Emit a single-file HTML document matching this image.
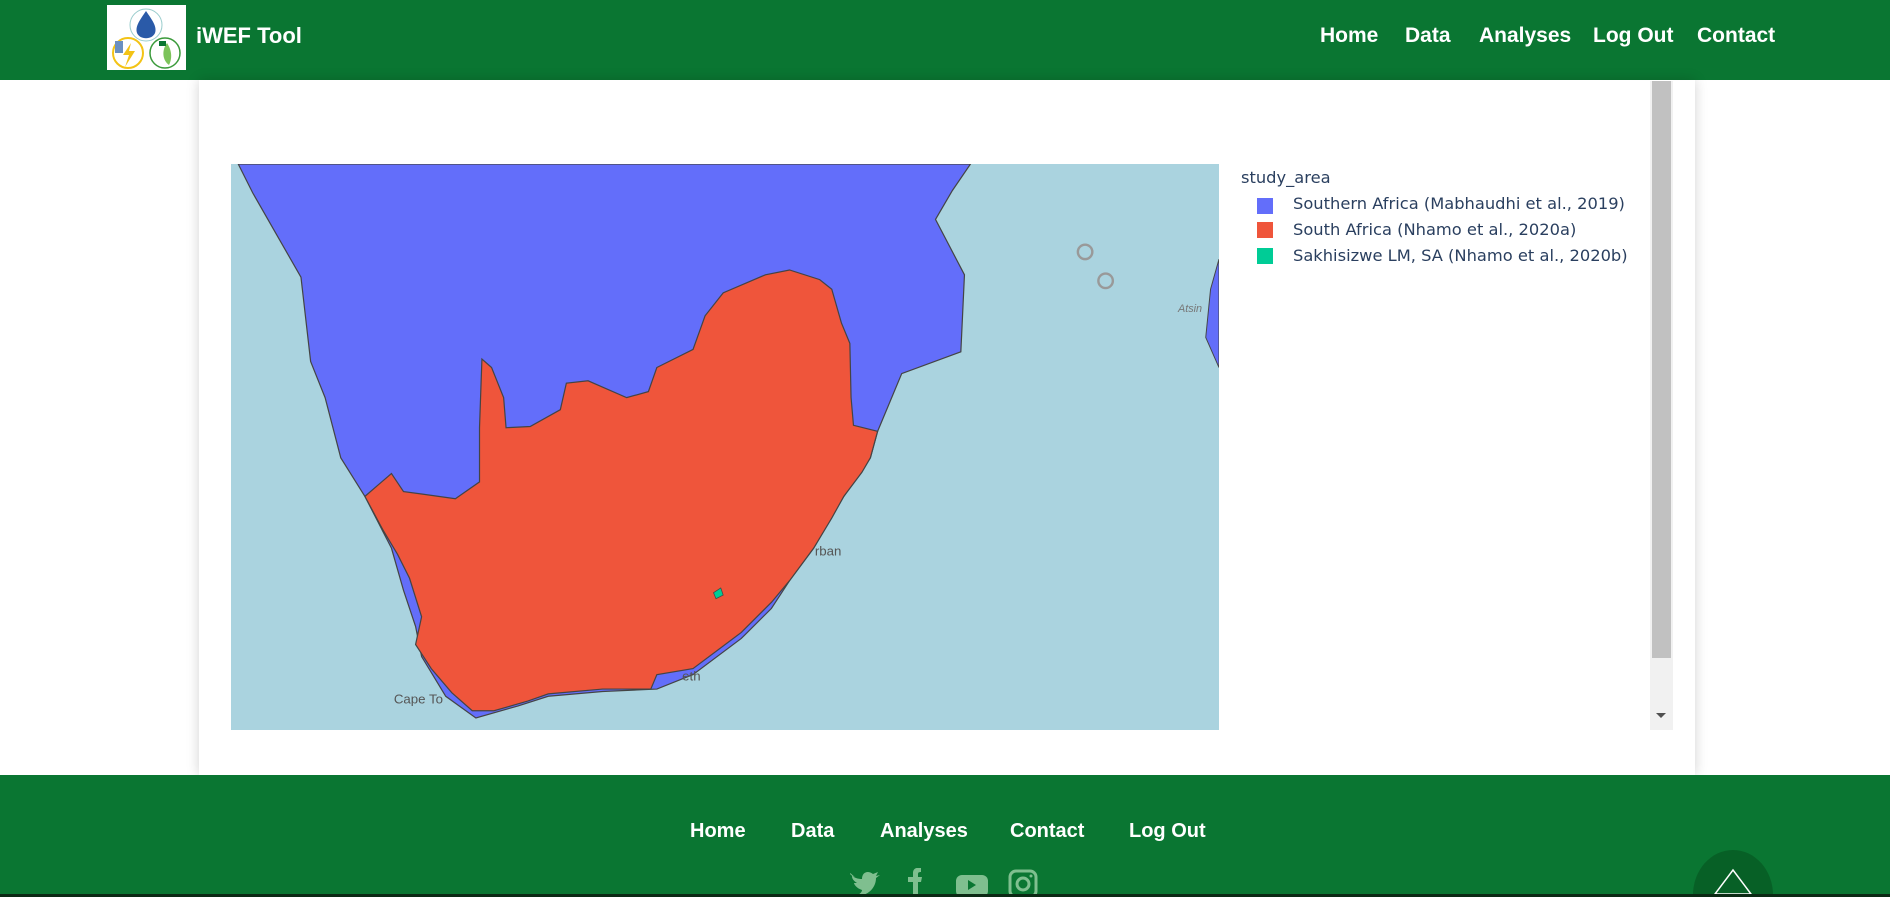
<!DOCTYPE html>
<html><head><meta charset="utf-8"><style>
*{margin:0;padding:0;box-sizing:border-box}
html,body{width:1890px;height:897px;overflow:hidden}
body{background:#fff;font-family:"Liberation Sans",Arial,sans-serif;position:relative}
#wrap{position:relative;width:1890px;height:897px;overflow:hidden}
.hdr{position:absolute;left:0;top:0;width:1890px;height:80px;background:#0a7632}
.logo{position:absolute;left:107px;top:5px;width:79px;height:65px;background:#fff}
.brand{position:absolute;left:196px;top:23px;color:#fff;font-weight:bold;font-size:22px}
.nav a{position:absolute;top:24px;color:#fff;font-weight:bold;font-size:21px;text-decoration:none}
.card{position:absolute;left:199px;top:80px;width:1496px;height:695px;background:#fff;box-shadow:0 0 12px rgba(0,0,0,.18)}
.map{position:absolute;left:231px;top:164px}
.leg{position:absolute;color:#2a3f5f;font-family:"DejaVu Sans",sans-serif;font-size:16.3px}
.sq{position:absolute;left:1257px;width:16px;height:16px}
.sb{position:absolute;left:1650px;top:81px;width:23px;height:649px;background:#f1f1f1}
.th{position:absolute;left:1652px;top:81px;width:19px;height:577px;background:#c1c1c1}
.ftr{position:absolute;left:0;top:775px;width:1890px;height:122px;background:#0a7632}
.fl a{position:absolute;top:820px;color:#fff;font-weight:bold;font-size:20px;text-decoration:none}
.up{position:absolute;left:1693px;top:850px;width:80px;height:90px;border-radius:50%;background:#076026}
.bl{position:absolute;left:0;top:894px;width:1890px;height:3px;background:#0b2914}
</style></head><body><div id="wrap">
<div class="hdr"></div>
<div class="logo"><svg width="79" height="65" viewBox="0 0 79 65">
<circle cx="39" cy="20" r="16" fill="none" stroke="#9cc" stroke-width="1"/>
<path d="M39 6 C32 16 28 22 30 28 C33 35 45 35 48 28 C50 22 46 16 39 6Z" fill="#2a5aa8"/>
<circle cx="21" cy="48" r="15" fill="none" stroke="#f3c316" stroke-width="2"/>
<rect x="8" y="36" width="8" height="12" fill="#6a8fc0"/>
<path d="M24 38 L16 50 L22 50 L18 62 L28 46 L22 46Z" fill="#f3c316"/>
<circle cx="58" cy="48" r="15" fill="none" stroke="#3a9a3a" stroke-width="1.5"/>
<path d="M60 38 C54 46 56 56 62 60 C66 52 64 44 60 38Z" fill="#7cc35a"/>
<rect x="52" y="36" width="7" height="5" fill="#0a7632"/>
</svg></div>
<div class="brand">iWEF Tool</div>
<div class="nav"><a style="left:1320px">Home</a><a style="left:1405px">Data</a><a style="left:1479px">Analyses</a><a style="left:1593px">Log Out</a><a style="left:1697px">Contact</a></div>
<div class="card"></div>
<svg class="map" width="988" height="566" viewBox="192 136 819 470" preserveAspectRatio="none" style="font-family:'Liberation Sans',sans-serif">
<rect x="192" y="136" width="819" height="470" fill="#aad3df"/>
<path d="M198,136 L805,136 L790,158 L776,182 L800,228 L797,292 L748,310 L728,358 L722,380 L700,412 L675,455 L655,482 L640,505 L615,530 L575,560 L545,572 L500,574 L455,578 L430,586 L395,596 L370,578 L350,545 L345,520 L335,490 L325,455 L303,412 L283,380 L270,330 L258,300 L250,230 L230,195 L210,160Z" fill="#636efa" stroke="#444" stroke-width="1"/>
<path d="M303,412 L325,393 L335,408 L350,410 L378,414 L398,400 L398,355 L400,298 L408,305 L418,330 L420,355 L440,354 L465,340 L470,318 L488,316 L520,330 L538,325 L545,305 L575,290 L585,262 L600,243 L635,228 L655,224 L680,232 L690,240 L698,268 L705,285 L706,330 L708,353 L728,358 L722,380 L715,392 L700,412 L690,430 L675,455 L655,482 L640,500 L615,525 L575,555 L545,560 L540,572 L500,572 L455,576 L438,582 L410,590 L392,590 L375,575 L358,555 L345,535 L350,512 L340,480 L330,460 L318,440Z" fill="#ef553b" stroke="#444" stroke-width="1"/>
<path d="M592,492 L598,488 L600,494 L594,497Z" fill="#00cc96" stroke="#444" stroke-width=".6"/>
<path d="M1011,215 L1004,240 L1000,280 L1011,305Z" fill="#636efa" stroke="#444" stroke-width=".8"/>
<circle cx="900" cy="209" r="6" fill="none" stroke="#999" stroke-width="2"/>
<circle cx="917" cy="233" r="6" fill="none" stroke="#999" stroke-width="2"/>
<g fill="#555" font-size="11"><text x="327" y="584">Cape To</text><text x="676" y="461">rban</text><text x="566" y="565">eth</text><text x="977" y="259" font-size="9" font-style="italic" fill="#777">Atsin</text></g>
</svg>
<div class="leg" style="left:1241px;top:168px">study_area</div>
<div class="sq" style="top:198px;background:#636efa"></div>
<div class="sq" style="top:222px;background:#ef553b"></div>
<div class="sq" style="top:248px;background:#00cc96"></div>
<div class="leg" style="left:1293px;top:194px">Southern Africa (Mabhaudhi et al., 2019)</div>
<div class="leg" style="left:1293px;top:220px">South Africa (Nhamo et al., 2020a)</div>
<div class="leg" style="left:1293px;top:246px">Sakhisizwe LM, SA (Nhamo et al., 2020b)</div>
<div class="sb"></div><div class="th"></div>
<div style="position:absolute;left:1656px;top:713px;width:0;height:0;border-left:5px solid transparent;border-right:5px solid transparent;border-top:5px solid #505050"></div>
<div class="ftr"></div>
<div class="fl"><a style="left:690px">Home</a><a style="left:791px">Data</a><a style="left:880px">Analyses</a><a style="left:1010px">Contact</a><a style="left:1129px">Log Out</a></div>
<svg style="position:absolute;left:848px;top:868px" width="196" height="29" viewBox="0 0 196 29" fill="#7fbf8f">
<path d="M2 6 C6 10 10 11 14 11 C14 4 20 2 25 6 L30 4 L28 8 L32 7 L28 10 C28 20 20 28 8 28 C12 26 14 24 14 22 C8 20 6 16 6 15 L9 15 C4 12 4 9 4 8 L7 9 C3 6 2 4 2 6Z"/>
<path d="M65 29 L65 14 L60 14 L60 9 L65 9 L65 5 C65 1 68 -1 73 0 L73 4 C70 4 70 5 70 7 L70 9 L74 9 L73 14 L70 14 L70 29Z"/>
<rect x="108" y="7" width="32" height="22" rx="6"/><path d="M120 12 L128 17 L120 22Z" fill="#0a7632"/>
<rect x="162" y="3" width="26" height="26" rx="6" fill="none" stroke="#7fbf8f" stroke-width="3"/><circle cx="175" cy="16" r="6" fill="none" stroke="#7fbf8f" stroke-width="3"/><circle cx="183" cy="8" r="1.5"/>
</svg>
<div class="up"></div>
<svg style="position:absolute;left:1713px;top:868px" width="40" height="29"><path d="M2 26 L20 2 L38 26Z" fill="none" stroke="#fff" stroke-width="1.5"/></svg>
<div class="bl"></div>
</div></body></html>
